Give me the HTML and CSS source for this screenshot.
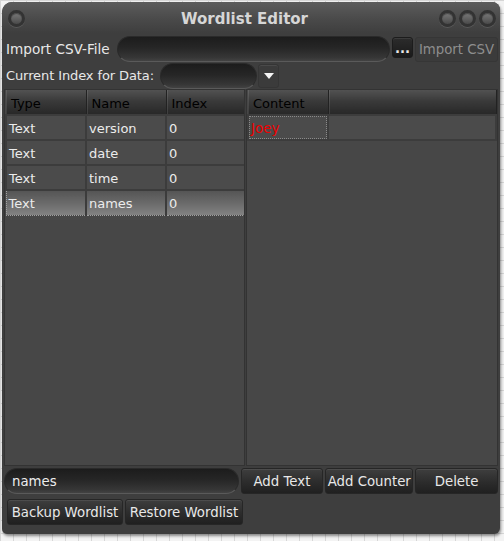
FILE: index.html
```html
<!DOCTYPE html>
<html>
<head>
<meta charset="utf-8">
<link rel="stylesheet" href="styles.css">
</head>
<body>
<div class="window">
  <div class="titlebar">
    <span class="dot"></span>
    <span class="title">Wordlist Editor</span>
    <span class="dots"><span class="dot"></span><span class="dot"></span><span class="dot"></span></span>
  </div>
  <div class="content">
    <div class="row r1">
      <span class="label l1">Import CSV-File</span>
      <span class="field f1"></span>
      <span class="btn dark">...</span>
      <span class="btn disabled">Import CSV</span>
    </div>
    <div class="row r2">
      <span class="label l2">Current Index for Data:</span>
      <span class="field combo"></span>
      <span class="btn drop"><span class="tri"></span></span>
    </div>
    <div class="tables">
      <div class="pane left">
        <table>
          <thead><tr><th class="c1">Type</th><th class="c2">Name</th><th class="c3">Index</th></tr></thead>
          <tbody>
            <tr><td>Text</td><td>version</td><td>0</td></tr>
            <tr><td>Text</td><td>date</td><td>0</td></tr>
            <tr><td>Text</td><td>time</td><td>0</td></tr>
            <tr class="sel"><td>Text</td><td>names</td><td>0</td></tr>
          </tbody>
        </table>
      </div>
      <div class="pane right">
        <table>
          <thead><tr><th class="cc">Content</th><th></th></tr></thead>
          <tbody>
            <tr><td class="joey"><span>Joey</span></td><td></td></tr>
          </tbody>
        </table>
      </div>
    </div>
    <div class="row r3">
      <span class="field name">names</span>
      <span class="btn b-add">Add Text</span>
      <span class="btn b-counter">Add Counter</span>
      <span class="btn b-del">Delete</span>
    </div>
    <div class="row r4">
      <span class="btn b-backup">Backup Wordlist</span>
      <span class="btn b-restore">Restore Wordlist</span>
    </div>
  </div>
</div>
</body>
</html>
```

FILE: styles.css
```css
html, body {
  margin: 0;
  padding: 0;
}
body {
  width: 504px;
  height: 541px;
  overflow: hidden;
  background-color: #f3f3f3;
  background-image:
    repeating-linear-gradient(to right, #d6d6d6 0 1px, transparent 1px 13px),
    repeating-linear-gradient(to bottom, #d6d6d6 0 1px, transparent 1px 13px);
  font-family: "DejaVu Sans", sans-serif;
  font-size: 13px;
  color: #e8e8e8;
}
.window {
  margin: 2px 0 0 2px;
  width: 498px;
  height: 532px;
  background: #3e3e3e;
  border-radius: 10px 8px 6px 5px;
  box-shadow: 1px 2px 3px rgba(0,0,0,0.45);
  overflow: hidden;
}
.titlebar {
  height: 31px;
  display: flex;
  align-items: center;
  padding: 2px 4px 0 6px;
  box-sizing: border-box;
  background: linear-gradient(#5c5c5c, #4a4a4a 55%, #3e3e3e);
}
.title {
  flex: 1;
  text-align: center;
  font-weight: bold;
  font-size: 15px;
  color: #d6d6d6;
  padding-left: 25px;
}
.dots {
  display: flex;
  gap: 3px;
}
.dot {
  width: 17px;
  height: 17px;
  box-sizing: border-box;
  border-radius: 50%;
  border: 3px solid #333;
  background: linear-gradient(#7a7a7a, #4a4a4a);
  box-shadow: 0 1px 0 rgba(255,255,255,0.12), inset 0 1px 1px rgba(0,0,0,0.4);
}
.content {
  padding: 3px 2px 0 2px;
  display: flex;
  flex-direction: column;
}
.row {
  display: flex;
  align-items: center;
}
.r1 { height: 26px; }
.r2 { height: 27px; }
.label {
  box-sizing: border-box;
  padding-left: 2px;
  white-space: nowrap;
  font-size: 13px;
}
.l1 { width: 113px; font-size: 13.6px; }
.l2 { width: 156px; letter-spacing: -0.1px; }
.field {
  box-sizing: border-box;
  height: 26px;
  border-radius: 13px;
  background: linear-gradient(#1c1c1c, #262626 45%, #363636 85%, #424242);
  border: 1px solid #2a2a2a;
  border-bottom-color: #5a5a5a;
  display: flex;
  align-items: center;
}
.f1 { width: 273px; }
.combo { width: 97px; }
.btn {
  box-sizing: border-box;
  display: flex;
  align-items: center;
  justify-content: center;
  border-radius: 3px;
  background: linear-gradient(#3e3e3e, #2c2c2c 55%, #202020);
  border: 1px solid #262626;
  box-shadow: inset 0 1px 0 rgba(255,255,255,0.08);
  color: #e8e8e8;
  white-space: nowrap;
  font-size: 13.3px;
}
.r1 .dark {
  width: 21px;
  height: 21px;
  margin-left: 2px;
  align-self: flex-start;
  margin-top: 1px;
  background: linear-gradient(#2c2c2c, #1a1a1a);
  border-color: #1c1c1c;
  font-weight: bold;
  padding-top: 2px;
}
.r1 .disabled {
  width: 83px;
  height: 25px;
  margin-left: 2px;
  align-self: flex-start;
  margin-top: 1px;
  background: #3b3b3b;
  border-color: #363636;
  box-shadow: none;
  color: #8e8e8e;
  font-size: 13.3px;
}
.drop {
  width: 21px;
  height: 24px;
  margin-left: 1px;
  background: #3b3b3b;
  border-color: #353535;
}
.tri {
  width: 0;
  height: 0;
  border-left: 5px solid transparent;
  border-right: 5px solid transparent;
  border-top: 6px solid #f4f4f4;
}
.tables {
  height: 377px;
  display: flex;
  gap: 1px;
}
.pane {
  background: #474747;
  border: 1px solid #333;
  box-sizing: border-box;
  height: 377px;
  overflow: hidden;
}
.left { width: 241px; }
.right { width: 252px; }
table {
  border-collapse: collapse;
  table-layout: fixed;
}
.left table { width: 239px; }
.right table { width: 250px; }
th {
  height: 25px;
  box-sizing: border-box;
  padding: 2px 0 0 5px;
  text-align: left;
  font-weight: normal;
  font-size: 13px;
  color: #000;
  background: linear-gradient(#525252, #3a3a3a 45%, #282828);
  border-right: 1px solid #222;
  box-shadow: inset 1px 0 0 rgba(255,255,255,0.1);
}
.c1, .c2, .c3 { width: 80px; }
.cc { width: 80px; }
td {
  height: 25px;
  box-sizing: border-box;
  padding: 1px 0 0 2px;
  font-size: 13px;
  background: #4b4b4b;
  border: 2px solid #3c3c3c;
  border-top: 0;
  color: #ececec;
}
tbody tr:first-child td { border-top: 2px solid #3c3c3c; }
.sel td {
  background: linear-gradient(#555, #6a6a6a 50%, #828282);
  border-top: 1px dotted #a0a0a0;
  border-bottom: 1px dotted #a0a0a0;
}
.sel td:first-child { border-left: 1px dotted #a0a0a0; }
.sel td:last-child { border-right: 1px dotted #a0a0a0; }
.joey {
  padding: 0;
}
.joey span {
  display: flex;
  align-items: center;
  height: 23px;
  box-sizing: border-box;
  margin: 0;
  padding-left: 1px;
  border: 1px dotted #8a8a8a;
  color: #ee0000;
  font-size: 13.5px;
}
.r3 {
  height: 26px;
  margin-top: 2px;
}
.name {
  width: 235px;
  padding-left: 7px;
  font-size: 13.3px;
  color: #ededed;
}
.r3 .btn { height: 26px; margin-left: 2px; }
.b-add { width: 83px; }
.b-counter { width: 88px; }
.b-del { width: 83px; }
.r4 {
  height: 26px;
  margin-top: 5px;
  padding-left: 3px;
}
.r4 .btn { height: 26px; }
.b-backup { width: 116px; }
.b-restore { width: 118px; margin-left: 2px; }
```
